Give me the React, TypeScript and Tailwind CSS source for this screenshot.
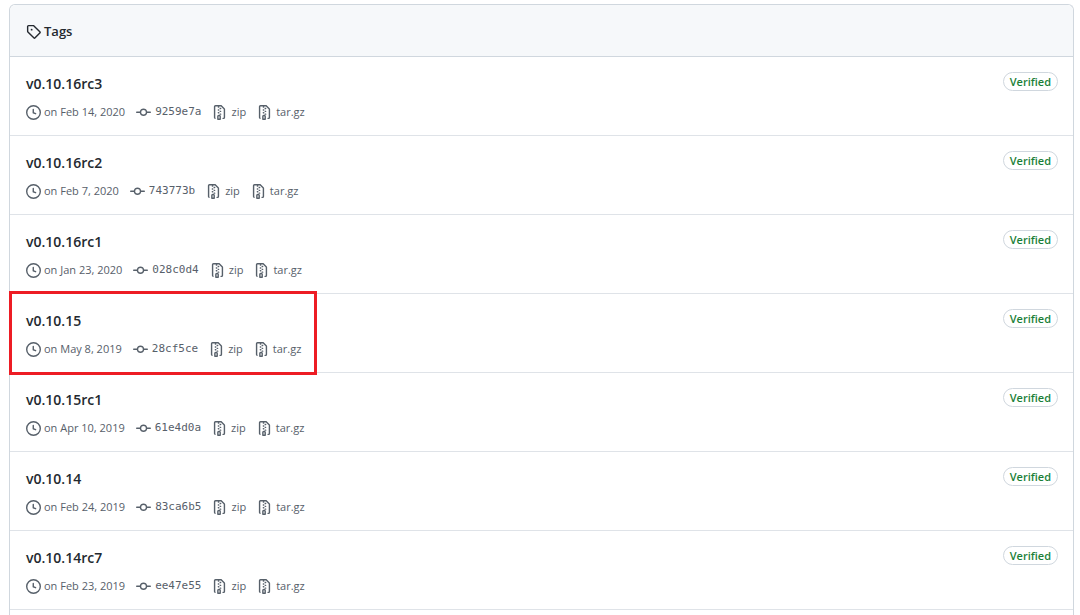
import type { ReactNode } from "react";

type Tag = {
  name: string;
  date: string;
  commit: string;
  highlighted?: boolean;
};

const tags: Tag[] = [
  { name: "v0.10.16rc3", date: "Feb 14, 2020", commit: "9259e7a" },
  { name: "v0.10.16rc2", date: "Feb 7, 2020", commit: "743773b" },
  { name: "v0.10.16rc1", date: "Jan 23, 2020", commit: "028c0d4" },
  { name: "v0.10.15", date: "May 8, 2019", commit: "28cf5ce", highlighted: true },
  { name: "v0.10.15rc1", date: "Apr 10, 2019", commit: "61e4d0a" },
  { name: "v0.10.14", date: "Feb 24, 2019", commit: "83ca6b5" },
  { name: "v0.10.14rc7", date: "Feb 23, 2019", commit: "ee47e55" },
];

const icons = {
  tag: "M1 7.775V2.75C1 1.784 1.784 1 2.75 1h5.025c.464 0 .91.184 1.238.513l6.25 6.25a1.75 1.75 0 0 1 0 2.474l-5.026 5.026a1.75 1.75 0 0 1-2.474 0l-6.25-6.25A1.752 1.752 0 0 1 1 7.775Zm1.5 0c0 .066.026.13.073.177l6.25 6.25a.25.25 0 0 0 .354 0l5.025-5.025a.25.25 0 0 0 0-.354l-6.25-6.25a.25.25 0 0 0-.177-.073H2.75a.25.25 0 0 0-.25.25ZM6 5a1 1 0 1 1 0 2 1 1 0 0 1 0-2Z",
  clock:
    "M8 0a8 8 0 1 1 0 16A8 8 0 0 1 8 0ZM1.5 8a6.5 6.5 0 1 0 13 0 6.5 6.5 0 0 0-13 0Zm7-3.25v2.992l2.028.812a.75.75 0 0 1-.557 1.392l-2.5-1A.751.751 0 0 1 7 8.25v-3.5a.75.75 0 0 1 1.5 0Z",
  commit:
    "M11.93 8.5a4.002 4.002 0 0 1-7.86 0H.75a.75.75 0 0 1 0-1.5h3.32a4.002 4.002 0 0 1 7.86 0h3.32a.75.75 0 0 1 0 1.5Zm-1.43-.75a2.5 2.5 0 1 0-5 0 2.5 2.5 0 0 0 5 0Z",
  zip: "M3.5 1.75v11.5c0 .09.048.173.126.217a.75.75 0 0 1-.752 1.298A1.748 1.748 0 0 1 2 13.25V1.75C2 .784 2.784 0 3.75 0h5.586c.464 0 .909.185 1.237.513l2.914 2.914c.329.328.513.773.513 1.237v8.586A1.75 1.75 0 0 1 12.25 15h-.5a.75.75 0 0 1 0-1.5h.5a.25.25 0 0 0 .25-.25V4.664a.25.25 0 0 0-.073-.177L9.513 1.573a.25.25 0 0 0-.177-.073H7.25a.75.75 0 0 1 0 1.5h-.5a.75.75 0 0 1 0-1.5h-3a.25.25 0 0 0-.25.25Zm3.75 8.75h.5c.966 0 1.75.784 1.75 1.75v3a.75.75 0 0 1-.75.75h-2.5a.75.75 0 0 1-.75-.75v-3c0-.966.784-1.75 1.75-1.75ZM6 5.25a.75.75 0 0 1 .75-.75h.5a.75.75 0 0 1 0 1.5h-.5A.75.75 0 0 1 6 5.25Zm.75 2.25h.5a.75.75 0 0 1 0 1.5h-.5a.75.75 0 0 1 0-1.5ZM8 6.75A.75.75 0 0 1 8.75 6h.5a.75.75 0 0 1 0 1.5h-.5A.75.75 0 0 1 8 6.75ZM8.75 3h.5a.75.75 0 0 1 0 1.5h-.5a.75.75 0 0 1 0-1.5ZM8 9.75A.75.75 0 0 1 8.75 9h.5a.75.75 0 0 1 0 1.5h-.5A.75.75 0 0 1 8 9.75Zm-1 2.5v2.25h1v-2.25a.25.25 0 0 0-.25-.25h-.5a.25.25 0 0 0-.25.25Z",
};

function Icon({ name }: { name: keyof typeof icons }) {
  return (
    <svg viewBox="0 0 16 16" className="size-[15px] shrink-0 fill-current" aria-hidden="true">
      <path d={icons[name]} />
    </svg>
  );
}

function MetaLink({ icon, children }: { icon: keyof typeof icons; children: ReactNode }) {
  return (
    <a href="#" className="flex items-center gap-1 hover:text-[#0969da]">
      <Icon name={icon} />
      {children}
    </a>
  );
}

function TagRow({ tag }: { tag: Tag }) {
  return (
    <li className="relative flex items-start justify-between border-b border-[#dfe3e8] pt-[15px] pr-[15px] pb-3 pl-4">
      <div>
        <h2 className="text-sm leading-6 font-semibold text-[#24292f]">
          <a href="#">{tag.name}</a>
        </h2>
        <div className="mt-[5px] flex items-center gap-[11px] text-[11px] leading-[22px] text-[#57606a]">
          <span className="flex items-center gap-[3px]">
            <Icon name="clock" />
            on {tag.date}
          </span>
          <MetaLink icon="commit">
            <code className="font-['DejaVu_Sans_Mono',monospace] text-[11px]">{tag.commit}</code>
          </MetaLink>
          <MetaLink icon="zip">zip</MetaLink>
          <MetaLink icon="zip">tar.gz</MetaLink>
        </div>
      </div>

      <button
        type="button"
        className="rounded-full border border-[#d0d7de] px-1.5 text-[11px] leading-[17px] font-semibold text-[#1a7f37]"
      >
        Verified
      </button>

      {tag.highlighted && (
        <div className="pointer-events-none absolute -inset-y-[3px] -left-px z-10 w-[308px] border-3 border-[#ed1c24]" />
      )}
    </li>
  );
}

export default function App() {
  return (
    <main className="bg-white pt-1 pr-1.5 pl-[9px] font-['Open_Sans','Noto_Sans',sans-serif]">
      <section className="rounded-t-md border border-b-0 border-[#d0d7de]">
        <h1 className="flex items-center gap-[3px] rounded-t-md border-b border-[#d0d7de] bg-[#f6f8fa] px-4 pt-4 pb-3.5 text-[13px] leading-[21px] font-semibold text-[#24292f]">
          <Icon name="tag" />
          Tags
        </h1>
        <ul className="pb-3">
          {tags.map((tag) => (
            <TagRow key={tag.name} tag={tag} />
          ))}
        </ul>
      </section>
    </main>
  );
}
